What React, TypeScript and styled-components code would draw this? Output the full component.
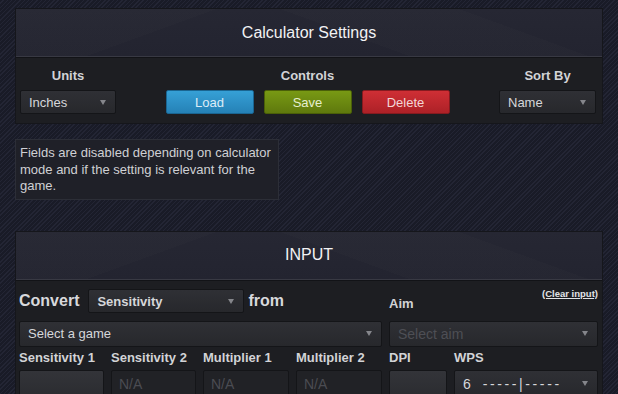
import React from "react";
import styled, { createGlobalStyle } from "styled-components";

const GlobalStyle = createGlobalStyle`
  html, body {
    margin: 0;
    padding: 0;
  }
  body {
    width: 618px;
    height: 394px;
    overflow: hidden;
    font-family: "Liberation Sans", Arial, sans-serif;
    background-color: #1a1c28;
    background-image: repeating-linear-gradient(
      135deg,
      #191b27 0px,
      #191b27 2px,
      #232534 2px,
      #232534 3px
    );
  }
`;

const Page = styled.div`
  padding: 8px 15px 0 15px;
  display: flex;
  flex-direction: column;
`;

const Panel = styled.section`
  border: 1px solid #15161b;
  background: #1d1e22;
`;

const PanelHeader = styled.header`
  height: 47px;
  display: flex;
  align-items: center;
  justify-content: center;
  color: #f2f2f4;
  font-size: 16px;
  background:
    linear-gradient(160deg, rgba(255, 255, 255, 0.012) 0 28%, transparent 28% 100%),
    linear-gradient(20deg, transparent 0 55%, rgba(255, 255, 255, 0.012) 55% 80%, transparent 80%),
    linear-gradient(180deg, #262733 0%, #232430 100%);
  border-bottom: 1px solid #383943;
  box-shadow: 0 1px 0 #121317;
`;

const SettingsBody = styled.div`
  display: flex;
  justify-content: space-between;
  align-items: flex-end;
  padding: 10px 6px 9px 4px;
  margin-top: 1px;
`;

const Group = styled.div<{ $width: number }>`
  width: ${(p) => p.$width}px;
  display: flex;
  flex-direction: column;
  align-items: center;
  gap: 7px;
`;

const GroupLabel = styled.div`
  color: #d2d3d6;
  font-size: 13px;
  font-weight: bold;
  line-height: 15px;
`;

const ButtonRow = styled.div`
  display: flex;
  gap: 10px;
`;

const tones = {
  blue: { top: "#36a0d6", bottom: "#2581b6", border: "#1a6591", text: "#dcecf7" },
  green: { top: "#789914", bottom: "#5f790d", border: "#4a5f08", text: "#e6eed0" },
  red: { top: "#cf2f35", bottom: "#ad2127", border: "#861a1f", text: "#f3d6d7" },
};

const Button = styled.button<{ $tone: keyof typeof tones }>`
  width: 88px;
  height: 24px;
  border-radius: 2px;
  border: 1px solid ${(p) => tones[p.$tone].border};
  background: linear-gradient(180deg, ${(p) => tones[p.$tone].top}, ${(p) => tones[p.$tone].bottom});
  color: ${(p) => tones[p.$tone].text};
  font-family: "Liberation Sans", Arial, sans-serif;
  font-size: 13px;
  padding: 0;
  cursor: pointer;
`;

const Select = styled.div<{ $width?: string; $height?: number; $muted?: boolean; $bold?: boolean }>`
  width: ${(p) => p.$width || "100%"};
  height: ${(p) => p.$height || 24}px;
  box-sizing: border-box;
  display: flex;
  align-items: center;
  justify-content: space-between;
  padding: 0 9px 0 8px;
  border: 1px solid #141518;
  border-radius: 2px;
  background: linear-gradient(180deg, #2f3035 0%, #27282c 100%);
  color: ${(p) => (p.$muted ? "#4e4f55" : "#d6d7da")};
  font-size: ${(p) => (p.$muted ? 14 : 13)}px;
  font-weight: ${(p) => (p.$bold ? "bold" : "normal")};
  white-space: pre;
  &::after {
    content: "";
    border-left: 3.5px solid transparent;
    border-right: 3.5px solid transparent;
    border-top: 5px solid #85868b;
  }
`;

const Dashes = styled.span`
  letter-spacing: 2.6px;
  margin-left: 12px;
`;

const Note = styled.div`
  margin-top: 15px;
  width: 264px;
  box-sizing: border-box;
  padding: 5px 4px 4px 4px;
  background: #1f2028;
  border: 1px solid #2c2e37;
  color: #cfd0d4;
  font-size: 13px;
  line-height: 16.5px;
`;

const InputPanel = styled(Panel)`
  margin-top: 31px;
`;

const InputBody = styled.div`
  display: grid;
  grid-template-columns: 85px 85px 86px 86px 58px 144px;
  column-gap: 7px;
  padding: 9px 4px 0 3px;
  margin-top: 1px;
`;

const ConvertRow = styled.div`
  grid-column: 1 / 5;
  display: flex;
  align-items: center;
  height: 23px;
  gap: 9px;
  color: #d8d9dc;
  font-size: 16px;
  font-weight: bold;
`;

const FromText = styled.span`
  margin-left: -5px;
`;

const AimCell = styled.div`
  grid-column: 5 / 7;
  display: flex;
  flex-direction: column;
  height: 23px;
`;

const ClearLink = styled.a`
  align-self: flex-end;
  color: #e2e3e6;
  font-size: 9.5px;
  font-weight: bold;
  text-decoration: underline;
  line-height: 10px;
  margin-top: -1px;
`;

const AimLabel = styled.div`
  color: #d2d3d6;
  font-size: 13px;
  font-weight: bold;
  line-height: 15px;
  margin-top: -3px;
`;

const Wide = styled.div<{ $cols: string }>`
  grid-column: ${(p) => p.$cols};
  margin-top: 8px;
`;

const FieldLabel = styled.div`
  margin-top: 3px;
  color: #d2d3d6;
  font-size: 13px;
  font-weight: bold;
  line-height: 15px;
  white-space: nowrap;
`;

const Field = styled.div<{ $disabled?: boolean }>`
  margin-top: 5px;
  height: 28px;
  box-sizing: border-box;
  padding: 0 7px;
  display: flex;
  align-items: center;
  border: 1px solid #141518;
  border-radius: 2px;
  background: ${(p) =>
    p.$disabled ? "#212226" : "linear-gradient(180deg, #333439 0%, #2b2c30 100%)"};
  color: #4b4c52;
  font-size: 14px;
`;

const FieldCol = styled.div`
  display: flex;
  flex-direction: column;
`;

const WpsSelect = styled(Select)`
  margin-top: 5px;
  justify-content: flex-start;
  font-size: 14px;
  &::after {
    margin-left: auto;
  }
`;

const fields = [
  { label: "Sensitivity 1", disabled: false, value: "" },
  { label: "Sensitivity 2", disabled: true, value: "N/A" },
  { label: "Multiplier 1", disabled: true, value: "N/A" },
  { label: "Multiplier 2", disabled: true, value: "N/A" },
  { label: "DPI", disabled: false, value: "" },
];

export default function App() {
  return (
    <>
      <GlobalStyle />
      <Page>
        <Panel>
          <PanelHeader>Calculator Settings</PanelHeader>
          <SettingsBody>
            <Group $width={96}>
              <GroupLabel>Units</GroupLabel>
              <Select $width="96px">Inches</Select>
            </Group>
            <Group $width={286}>
              <GroupLabel>Controls</GroupLabel>
              <ButtonRow>
                <Button $tone="blue">Load</Button>
                <Button $tone="green">Save</Button>
                <Button $tone="red">Delete</Button>
              </ButtonRow>
            </Group>
            <Group $width={97}>
              <GroupLabel>Sort By</GroupLabel>
              <Select $width="97px">Name</Select>
            </Group>
          </SettingsBody>
        </Panel>

        <Note>
          Fields are disabled depending on calculator mode and if the setting is relevant for the
          game.
        </Note>

        <InputPanel>
          <PanelHeader>INPUT</PanelHeader>
          <InputBody>
            <ConvertRow>
              <span>Convert</span>
              <Select $width="156px" $height={24} $bold>
                Sensitivity
              </Select>
              <FromText>from</FromText>
            </ConvertRow>
            <AimCell>
              <ClearLink>(Clear input)</ClearLink>
              <AimLabel>Aim</AimLabel>
            </AimCell>

            <Wide $cols="1 / 5">
              <Select $height={26}>Select a game</Select>
            </Wide>
            <Wide $cols="5 / 7">
              <Select $height={26} $muted>
                Select aim
              </Select>
            </Wide>

            {fields.map((f) => (
              <FieldCol key={f.label}>
                <FieldLabel>{f.label}</FieldLabel>
                <Field $disabled={f.disabled}>{f.value}</Field>
              </FieldCol>
            ))}
            <FieldCol>
              <FieldLabel>WPS</FieldLabel>
              <WpsSelect $height={28}>
                6<Dashes>-----|-----</Dashes>
              </WpsSelect>
            </FieldCol>
          </InputBody>
        </InputPanel>
      </Page>
    </>
  );
}
